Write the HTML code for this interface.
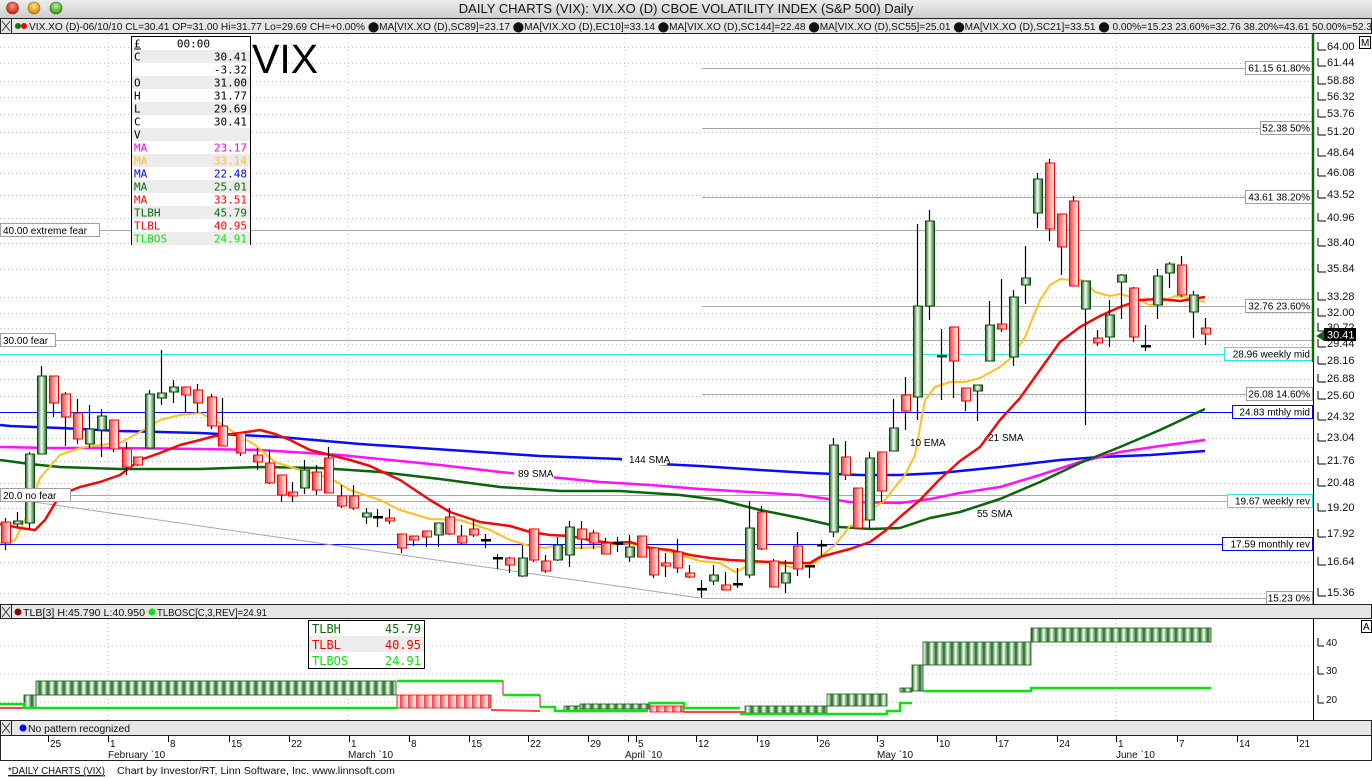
<!DOCTYPE html>
<html><head><meta charset="utf-8"><style>
html,body{margin:0;padding:0;background:#fff;width:1372px;height:778px;overflow:hidden}
svg{display:block}
text{font-family:"Liberation Sans",sans-serif}
.m{font-family:"DejaVu Sans Mono","Liberation Mono",monospace}
</style></head><body>
<svg id="s" width="1372" height="778" xmlns="http://www.w3.org/2000/svg">
<defs>
<linearGradient id="tb" x1="0" y1="0" x2="0" y2="1"><stop offset="0" stop-color="#ededed"/><stop offset="1" stop-color="#cdcdcd"/></linearGradient>
<linearGradient id="gc" x1="0" y1="0" x2="1" y2="0"><stop offset="0" stop-color="#1c6b1c"/><stop offset="0.45" stop-color="#ffffff"/><stop offset="1" stop-color="#1c6b1c"/></linearGradient>
<linearGradient id="rc" x1="0" y1="0" x2="1" y2="0"><stop offset="0" stop-color="#f04040"/><stop offset="1" stop-color="#ffffff"/></linearGradient>
<pattern id="gp" width="8" height="10" patternUnits="userSpaceOnUse"><rect width="8" height="10" fill="url(#gc)"/></pattern>
<pattern id="rp" width="8" height="10" patternUnits="userSpaceOnUse"><rect width="8" height="10" fill="url(#rc)"/></pattern>
<radialGradient id="tr" cx="0.5" cy="0.35" r="0.6"><stop offset="0" stop-color="#ff9a8a"/><stop offset="1" stop-color="#c81e10"/></radialGradient>
<radialGradient id="ty" cx="0.5" cy="0.35" r="0.6"><stop offset="0" stop-color="#ffe08a"/><stop offset="1" stop-color="#d88a00"/></radialGradient>
<radialGradient id="tg" cx="0.5" cy="0.35" r="0.6"><stop offset="0" stop-color="#b8f09a"/><stop offset="1" stop-color="#3a9a1a"/></radialGradient>
</defs>
<!-- title bar -->
<rect x="0" y="0" width="1372" height="18" fill="url(#tb)"/>
<circle cx="12.5" cy="8" r="6" fill="url(#tr)" stroke="#8a2a20" stroke-width="0.6"/>
<circle cx="34" cy="8" r="6" fill="url(#ty)" stroke="#8a6a10" stroke-width="0.6"/>
<circle cx="56" cy="8" r="6" fill="url(#tg)" stroke="#2a6a10" stroke-width="0.6"/>
<text x="686" y="13" font-size="13" text-anchor="middle" fill="#111">DAILY CHARTS (VIX): VIX.XO (D) CBOE VOLATILITY INDEX (S&amp;P 500) Daily</text>
<!-- legend bar -->
<rect x="0.5" y="18.5" width="1371" height="15" fill="#e6e6e6" stroke="#222"/>
<rect x="0.5" y="18.5" width="11" height="15" fill="#e6e6e6" stroke="#222"/>
<path d="M2 21 L10 31 M10 21 L2 31" stroke="#222" stroke-width="0.8"/>
<circle cx="18" cy="26" r="3" fill="#0a7a0a"/><circle cx="24" cy="26" r="3" fill="#e00"/>
<text x="29" y="30" font-size="10" textLength="1343" lengthAdjust="spacingAndGlyphs" fill="#111">VIX.XO (D)-06/10/10 CL=30.41 OP=31.00 Hi=31.77 Lo=29.69 CH=+0.00% ⬤MA[VIX.XO (D),SC89]=23.17 ⬤MA[VIX.XO (D),EC10]=33.14 ⬤MA[VIX.XO (D),SC144]=22.48 ⬤MA[VIX.XO (D),SC55]=25.01 ⬤MA[VIX.XO (D),SC21]=33.51 ⬤ 0.00%=15.23 23.60%=32.76 38.20%=43.61 50.00%=52.3</text>
<g id="grid"></g>
<g id="main"></g>
<!-- sep bar 1 -->
<rect x="0.5" y="604.5" width="1371" height="14" fill="#e6e6e6" stroke="#222"/>
<rect x="0.5" y="604.5" width="11" height="14" fill="#e6e6e6" stroke="#222"/>
<path d="M2 607 L10 617 M10 607 L2 617" stroke="#222" stroke-width="0.8"/>
<circle cx="18" cy="612" r="3.5" fill="#7a0a0a"/>
<text x="23" y="616" font-size="10" fill="#111" textLength="122" lengthAdjust="spacingAndGlyphs">TLB[3] H:45.790 L:40.950</text>
<circle cx="152" cy="612" r="3.5" fill="#10e010"/>
<text x="157" y="616" font-size="10" fill="#111" textLength="110" lengthAdjust="spacingAndGlyphs">TLBOSC[C,3,REV]=24.91</text>
<g id="low"></g>
<!-- sep bar 2 -->
<rect x="0.5" y="720.5" width="1371" height="15" fill="#e6e6e6" stroke="#222"/>
<rect x="0.5" y="720.5" width="11" height="15" fill="#e6e6e6" stroke="#222"/>
<path d="M2 723 L10 733 M10 723 L2 733" stroke="#222" stroke-width="0.8"/>
<circle cx="23" cy="728" r="3.5" fill="#00f"/>
<text x="28" y="732" font-size="10" fill="#111" textLength="102" lengthAdjust="spacingAndGlyphs">No pattern recognized</text>
<!-- date axis -->
<rect x="0.5" y="735.5" width="1371" height="25" fill="#fff" stroke="#222"/>
<g id="dates"></g>
<text x="8" y="774" font-size="10" fill="#111" textLength="97" lengthAdjust="spacingAndGlyphs" text-decoration="underline">*DAILY CHARTS (VIX)</text>
<line x1="8" y1="776" x2="105" y2="776" stroke="#111" stroke-width="0.7"/>
<text x="117" y="774" font-size="10" fill="#111" textLength="278" lengthAdjust="spacingAndGlyphs">Chart by Investor/RT, Linn Software, Inc. www.linnsoft.com</text>
</svg>
<script>
var NS="http://www.w3.org/2000/svg";
function el(p,t,a,txt){var e=document.createElementNS(NS,t);for(var k in a)e.setAttribute(k,a[k]);if(txt!==undefined)e.textContent=txt;document.getElementById(p).appendChild(e);return e;}
// grid
var ly=[[64.00,46],[61.44,62],[58.88,80],[56.32,96],[53.76,113],[51.20,131],[48.64,152],[46.08,172],[43.52,194],[40.96,217],[38.40,242],[35.84,268],[33.28,296],[32.00,312],[30.72,327],[29.44,343],[28.16,360],[26.88,378],[25.60,395],[24.32,416],[23.04,437],[21.76,460],[20.48,482],[19.20,507],[17.92,533],[16.64,561],[15.36,592]];
ly.forEach(function(l){var y=l[1]+1.5;el("grid","line",{x1:0,x2:1312,y1:y,y2:y,stroke:"#c4c4c4","stroke-dasharray":"1,3","stroke-width":1});
el("grid","path",{d:"M1318 "+(l[1]+4)+" v-8 M1318 "+(l[1]+4)+" h8",stroke:"#000","stroke-width":1,fill:"none"});
if(l[0]!=30.72&&l[0]!=29.44)el("grid","text",{x:1327,y:l[1]+4,"font-size":11,fill:"#111"},l[0].toFixed(2));});
el("grid","text",{x:1327,y:331,"font-size":11,fill:"#111"},"30.72");
el("grid","text",{x:1327,y:347,"font-size":11,fill:"#111"},"29.44");
[108,348,625,877,1116].forEach(function(x){el("grid","line",{x1:x,x2:x,y1:34,y2:604,stroke:"#c4c4c4","stroke-dasharray":"1,3"});el("grid","line",{x1:x,x2:x,y1:619,y2:720,stroke:"#c4c4c4","stroke-dasharray":"1,3"});});
// horizontal lines
function hl(y,c,x1){el("main","line",{x1:x1||0,x2:1312,y1:y+.5,y2:y+.5,stroke:c,"stroke-width":1});}
hl(230,"#a8a8a8");hl(340,"#a8a8a8");hl(495,"#a8a8a8");
hl(68,"#a8a8a8",702);hl(128,"#a8a8a8",702);hl(197,"#a8a8a8",702);hl(306,"#a8a8a8",702);hl(394,"#a8a8a8",702);hl(598,"#a8a8a8",702);
hl(354,"#2ee6e6");hl(501,"#2ee6e6");hl(412,"#0000ff");hl(544,"#0000ff");
el("main","line",{x1:20,y1:500,x2:700,y2:598,stroke:"#a8a8a8","stroke-width":1});
// MAs
function pl(pts,c,w){el("main","polyline",{points:pts.map(function(p){return p.join(",")}).join(" "),fill:"none",stroke:c,"stroke-width":w||2.5,"stroke-linejoin":"round"});}
pl([[0,425],[10,426],[60,428],[120,431],[200,433],[280,437],[360,444],[420,448],[480,452],[540,456],[620,459],[640,463],[700,466],[760,470],[810,473],[860,475],[900,475],[940,473],[1000,467],[1060,460],[1100,457],[1150,455],[1205,451]],"#0a0aff");
pl([[0,447],[50,448],[120,448],[200,449],[260,450],[340,455],[390,460],[440,465],[500,472],[550,477],[600,482],[650,485],[700,489],[750,492],[800,495],[850,502],[900,503],[930,499],[960,493],[1000,487],[1040,475],[1080,462],[1120,452],[1160,446],[1205,440]],"#ff10ff");
pl([[0,460],[30,464],[60,467],[120,469],[200,469],[260,467],[320,468],[380,472],[440,479],[500,487],[560,491],[620,491],[680,495],[720,500],[760,510],[800,518],[840,527],[870,529],[900,528],[930,518],[960,512],[1000,499],[1040,482],[1080,463],[1120,447],[1160,430],[1205,409]],"#0a640a");
pl([[0,543],[15,540],[25,520],[40,478],[60,455],[80,448],[100,445],[120,443],[140,432],[160,420],[180,415],[200,413],[215,420],[235,433],[255,445],[275,462],[300,470],[330,478],[350,490],[380,500],[400,510],[430,519],[460,520],[490,530],[510,540],[530,546],[545,548],[555,546],[565,548],[580,548],[600,547],[620,543],[640,545],[660,549],[680,555],[700,561],[720,563],[735,572],[750,565],[760,562],[775,563],[790,567],[800,568],[815,563],[825,553],[835,545],[850,526],[860,525],[875,507],[885,500],[895,487],[905,475],[915,455],[925,400],[935,387],[950,382],[965,382],[980,378],[1000,367],[1012,357],[1025,337],[1040,300],[1050,285],[1060,279],[1072,280],[1082,280],[1095,292],[1110,296],[1120,294],[1135,298],[1150,305],[1160,303],[1175,296],[1190,298],[1205,302]],"#ffc020",2);
pl([[0,524],[20,528],[35,530],[45,520],[60,495],[80,487],[100,482],[120,475],[140,460],[160,453],[180,445],[200,440],[215,436],[240,433],[260,430],[275,434],[290,440],[310,450],[330,455],[350,460],[370,466],[400,480],[430,500],[450,512],[480,522],[510,526],[530,532],[550,535],[570,536],[590,540],[610,543],[630,542],[650,548],[670,550],[690,555],[710,558],[730,560],[750,561],[770,562],[790,563],[810,563],[820,557],[850,549],[870,542],[885,531],[900,517],[920,500],[940,479],[960,461],[980,447],[1000,420],[1020,398],[1040,370],[1060,342],[1080,327],[1100,316],[1120,307],[1140,300],[1160,299],[1180,301],[1205,297]],"#f00a0a");
// candles: x, open, close, high, low (y coords); g = green if close above
var C=[[5,522,543,518,550,'r'],[17,524,521,512,527,'g'],[29,523,454,452,530,'g'],[41,454,376,366,454,'g'],[53,376,403,376,417,'r'],[65,394,417,392,446,'r'],[77,413,439,399,444,'r'],[89,444,429,405,448,'g'],[101,430,416,409,457,'g'],[113,420,449,420,452,'r'],[126,449,467,442,475,'r'],[137,457,465,457,466,'r'],[149,448,394,390,448,'g'],[161,398,393,350,405,'g'],[173,392,387,380,403,'g'],[185,387,395,387,413,'r'],[197,390,403,384,413,'r'],[211,397,426,394,429,'r'],[222,426,446,398,446,'r'],[240,433,453,433,456,'r'],[257,455,462,448,470,'r'],[269,463,483,450,484,'r'],[281,475,495,475,502,'r'],[292,492,496,482,502,'r'],[304,488,470,460,494,'g'],[316,472,490,465,495,'r'],[328,458,493,447,493,'r'],[341,496,506,485,508,'r'],[353,496,508,485,510,'r'],[366,517,513,508,524,'g'],[377,517,517,509,527,'x'],[389,518,520,509,524,'r'],[401,534,548,534,553,'r'],[413,536,540,536,546,'r'],[426,531,537,531,547,'r'],[438,535,523,523,547,'g'],[449,517,534,508,535,'r'],[461,536,543,525,545,'r'],[473,529,535,519,537,'r'],[485,540,540,534,548,'x'],[497,558,558,554,569,'x'],[509,558,565,557,573,'r'],[522,576,558,545,577,'g'],[533,529,560,529,562,'r'],[545,561,571,555,573,'r'],[557,560,545,537,561,'g'],[569,555,527,521,567,'g'],[581,529,539,521,549,'r'],[593,533,543,530,549,'r'],[605,543,554,538,554,'r'],[617,543,543,537,552,'x'],[629,557,547,535,562,'g'],[641,536,557,536,557,'r'],[653,548,575,547,578,'r'],[665,563,566,553,577,'r'],[677,552,568,539,573,'r'],[689,573,577,565,578,'r'],[701,589,589,580,598,'x'],[713,581,575,565,585,'g'],[725,585,590,572,590,'r'],[737,584,584,568,588,'x'],[749,575,528,501,578,'g'],[761,512,549,506,550,'r'],[773,561,587,559,587,'r'],[785,583,573,560,593,'g'],[797,546,569,532,576,'r'],[809,566,566,565,578,'x'],[821,545,545,540,556,'x'],[833,532,445,438,537,'g'],[845,457,475,441,480,'r'],[857,488,528,488,528,'r'],[869,520,458,452,528,'g'],[881,452,491,452,502,'r'],[893,451,428,399,451,'g'],[905,395,411,377,430,'r'],[917,397,306,224,420,'g'],[929,306,221,210,320,'g'],[941,356,356,329,400,'gx'],[953,327,361,327,398,'r'],[965,388,401,388,411,'r'],[977,391,385,385,421,'g'],[989,361,325,301,361,'g'],[1001,324,329,279,332,'r'],[1013,357,297,290,366,'g'],[1025,285,278,246,304,'g'],[1037,213,179,173,228,'g'],[1049,163,229,159,241,'r'],[1061,214,247,214,275,'r'],[1073,201,286,196,286,'r'],[1085,309,281,281,425,'g'],[1097,338,343,330,346,'r'],[1109,337,315,300,347,'g'],[1121,282,275,274,319,'g'],[1133,288,337,287,342,'r'],[1145,346,346,325,351,'x'],[1157,305,276,269,319,'g'],[1169,273,264,262,288,'g'],[1181,265,295,256,297,'r'],[1193,312,295,291,338,'g'],[1205,328,334,318,345,'r']];
C.forEach(function(c){var x=c[0],o=c[1],cl=c[2],h=c[3],l=c[4],t=c[5];
el("main","line",{x1:x+.5,x2:x+.5,y1:h,y2:l,stroke:"#000","stroke-width":1.2});
if(t=='x'||t=='gx'){el("main","rect",{x:x-4,y:o-1,width:10,height:2.5,fill:t=='gx'?"#0a5a0a":"#000"});return;}
var top=Math.min(o,cl),ht=Math.max(Math.abs(o-cl),3);
if(t=='g')el("main","rect",{x:x-3.5,y:top,width:9,height:ht,fill:"url(#gc)",stroke:"#0a4a0a","stroke-width":1});
else el("main","rect",{x:x-3.5,y:top,width:9,height:ht,fill:"url(#rc)",stroke:"#f00","stroke-width":1});});
// labels on chart
function lab(x,y,s){el("main","text",{x:x,y:y,"font-size":10,fill:"#000"},s);}
function wl(x,w,y){el("main","rect",{x:x,y:y-9,width:w,height:12,fill:"#fff"});}
wl(622,45,462);lab(629,463,"144 SMA");wl(514,40,476);lab(518,477,"89 SMA");
lab(910,446,"10 EMA");lab(988,441,"21 SMA");lab(977,517,"55 SMA");
function box(x,y,w,h,s,c){el("main","rect",{x:x+.5,y:y+.5,width:w,height:h,fill:"#fff",stroke:c,"stroke-width":1});el("main","text",{x:x+w-2,y:y+h-2.5,"font-size":10,"text-anchor":"end",fill:"#000"},s);}
box(1245,61,67,13,"61.15 61.80%","#a0a0a0");box(1260,121,52,13,"52.38 50%","#a0a0a0");box(1245,190,67,13,"43.61 38.20%","#a0a0a0");
box(1245,299,67,13,"32.76 23.60%","#a0a0a0");box(1246,387,66,13,"26.08 14.60%","#a0a0a0");box(1266,591,46,13,"15.23 0%","#a0a0a0");
box(1224,347,88,13,"28.96 weekly mid","#2ee6e6");box(1227,494,85,13,"19.67 weekly rev","#2ee6e6");
box(1232,405,80,13,"24.83 mthly mid","#0000ff");box(1222,537,90,13,"17.59 monthly rev","#0000ff");
function lbox(x,y,w,s){el("main","rect",{x:x+.5,y:y+.5,width:w,height:13,fill:"#fff",stroke:"#a0a0a0"});el("main","text",{x:x+3,y:y+11,"font-size":10,fill:"#000"},s);}
lbox(0,223,99,"40.00 extreme fear");lbox(0,333,55,"30.00 fear");lbox(0,488,70,"20.0 no fear");
// right axis line
el("main","line",{x1:1313.5,x2:1313.5,y1:34,y2:604,stroke:"#000","stroke-width":1});
el("main","line",{x1:1313,x2:1313,y1:34,y2:362,stroke:"#0a6a0a","stroke-width":2.5});
el("main","path",{d:"M1316 336 L1324 331 L1324 341 Z",fill:"#0a6a0a"});
el("main","rect",{x:1324,y:328,width:32,height:13,fill:"#000"});
el("main","text",{x:1327,y:338.5,"font-size":11,fill:"#fff"},"30.41");
el("main","rect",{x:1359.5,y:36.5,width:11,height:12,fill:"#fff",stroke:"#000"});
el("main","text",{x:1361,y:46,"font-size":10,fill:"#000"},"M");
// data table
el("main","rect",{x:131.5,y:36.5,width:119,height:208,fill:"#fff",stroke:"#000"});
var rows=[["£","00:00","#000"],["C","30.41","#000"],["","-3.32","#000"],["O","31.00","#000"],["H","31.77","#000"],["L","29.69","#000"],["C","30.41","#000"],["V","","#000"],["MA","23.17","#f0f"],["MA","33.14","#ffc020"],["MA","22.48","#00f"],["MA","25.01","#0a6a0a"],["MA","33.51","#f00"],["TLBH","45.79","#0a6a0a"],["TLBL","40.95","#f00"],["TLBOS","24.91","#10e010"]];
rows.forEach(function(r,i){var y=37+i*13;if(i%2==1)el("main","rect",{x:132,y:y,width:118,height:13,fill:"#ececec"});
el("main","text",{x:134,y:y+10.5,"font-size":11,fill:r[2],"class":"m"},r[0]);
el("main","text",{x:i==0?210:247,y:y+10.5,"font-size":11,fill:r[2],"text-anchor":"end","class":"m"},r[1]);});
el("main","line",{x1:134,x2:141,y1:49,y2:49,stroke:"#000"});
el("main","text",{x:252,y:73,"font-size":41,fill:"#000"},"VIX");
// lower panel
[646,674,702].forEach(function(y){el("low","line",{x1:0,x2:1312,y1:y,y2:y,stroke:"#c4c4c4","stroke-dasharray":"1,3"});});
el("low","line",{x1:1313.5,x2:1313.5,y1:619,y2:720,stroke:"#000"});
[[642,"40"],[670,"30"],[699,"20"]].forEach(function(a){el("low","path",{d:"M1318 "+(a[0]+4)+" v-8 M1318 "+(a[0]+4)+" h6",stroke:"#000",fill:"none"});el("low","text",{x:1326,y:a[0]+4,"font-size":10,fill:"#111"},a[1]);});
el("low","rect",{x:1361.5,y:620.5,width:10,height:12,fill:"#fff",stroke:"#000"});el("low","text",{x:1363,y:630,"font-size":10},"A");
function gb(x1,x2,y1,y2){el("low","rect",{x:x1,y:y1,width:x2-x1,height:y2-y1,fill:"url(#gp)",stroke:"#0a5a0a","stroke-width":.8});}
function rb(x1,x2,y1,y2){el("low","rect",{x:x1,y:y1,width:x2-x1,height:y2-y1,fill:"url(#rp)",stroke:"#f00","stroke-width":.8});}
gb(24,36,695,708);gb(36,396,681,695);rb(397,491,695,708);
gb(564,580,706,711);gb(580,650,704,709);rb(650,684,706,712);gb(745,827,706,713);gb(827,887,694,706);gb(900,912,688,692);gb(912,923,665,691);gb(923,1031,642,665);gb(1031,1211,628,642);
function gl(pts,c,w){el("low","polyline",{points:pts,fill:"none",stroke:c,"stroke-width":w||2.5});}
gl("0,708 24,708","#f44",2);gl("491,710 540,711","#f44",2);gl("684,712 745,712","#f44",2);
gl("0,704 24,704 24,708 397,708","#10e010");
gl("397,681 503,681","#10e010");el("low","line",{x1:503,x2:503,y1:681,y2:695,stroke:"#f00"});
gl("503,695 540,695","#10e010");el("low","line",{x1:540,x2:540,y1:695,y2:707,stroke:"#f00"});
gl("540,707 555,707 555,711 648,711","#10e010");gl("648,703 684,703 684,708 740,708","#10e010");
gl("740,714 887,714 887,711 900,711 900,703 912,703","#10e010");gl("923,691 1031,691 1031,688 1211,688","#10e010");
el("low","rect",{x:308.5,y:620.5,width:116,height:48,fill:"#fff",stroke:"#000"});
el("low","rect",{x:309,y:636,width:115,height:16,fill:"#ececec"});
[["TLBH","45.79","#0a6a0a",633],["TLBL","40.95","#f00",649],["TLBOS","24.91","#10e010",665]].forEach(function(r){el("low","text",{x:312,y:r[3],"font-size":12,fill:r[2],"class":"m"},r[0]);el("low","text",{x:421,y:r[3],"font-size":12,fill:r[2],"class":"m","text-anchor":"end"},r[1]);});
// dates
var dt=[[48,"25"],[108,"1"],[168,"8"],[229,"15"],[289,"22"],[349,"1"],[409,"8"],[469,"15"],[528,"22"],[588,"29"],[636,"5"],[696,"12"],[757,"19"],[817,"26"],[877,"3"],[937,"10"],[996,"17"],[1057,"24"],[1116,"1"],[1177,"7"],[1237,"14"],[1297,"21"]];
dt.forEach(function(d){el("dates","line",{x1:d[0]+.5,x2:d[0]+.5,y1:736,y2:742,stroke:"#000"});el("dates","text",{x:d[0]+2,y:747,"font-size":10,fill:"#111"},d[1]);});
el("dates","line",{x1:628.5,x2:628.5,y1:736,y2:742,stroke:"#000"});
[[108,"February `10"],[348,"March `10"],[625,"April `10"],[877,"May `10"],[1116,"June `10"]].forEach(function(m){el("dates","text",{x:m[0],y:758,"font-size":10,fill:"#111"},m[1]);});
</script>
</body></html>
